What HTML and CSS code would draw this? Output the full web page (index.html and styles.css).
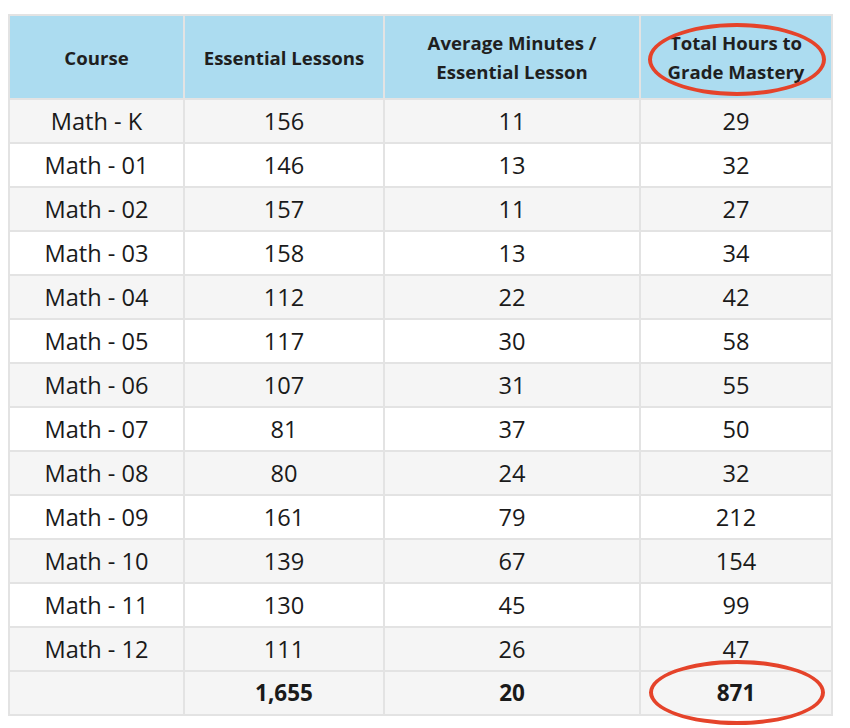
FILE: index.html
```html
<!DOCTYPE html>
<html>
<head>
<meta charset="utf-8">
<link rel="stylesheet" href="styles.css">
</head>
<body>
<table class="grid">
  <colgroup>
    <col class="c1"><col class="c2"><col class="c3"><col class="c4">
  </colgroup>
  <thead>
    <tr>
      <th>Course</th>
      <th>Essential Lessons</th>
      <th>Average Minutes /<br>Essential Lesson</th>
      <th class="mark-cell">Total Hours to<br>Grade Mastery<span class="ring ring-top"></span></th>
    </tr>
  </thead>
  <tbody>
    <tr><td>Math - K</td><td>156</td><td>11</td><td>29</td></tr>
    <tr><td>Math - 01</td><td>146</td><td>13</td><td>32</td></tr>
    <tr><td>Math - 02</td><td>157</td><td>11</td><td>27</td></tr>
    <tr><td>Math - 03</td><td>158</td><td>13</td><td>34</td></tr>
    <tr><td>Math - 04</td><td>112</td><td>22</td><td>42</td></tr>
    <tr><td>Math - 05</td><td>117</td><td>30</td><td>58</td></tr>
    <tr><td>Math - 06</td><td>107</td><td>31</td><td>55</td></tr>
    <tr><td>Math - 07</td><td>81</td><td>37</td><td>50</td></tr>
    <tr><td>Math - 08</td><td>80</td><td>24</td><td>32</td></tr>
    <tr><td>Math - 09</td><td>161</td><td>79</td><td>212</td></tr>
    <tr><td>Math - 10</td><td>139</td><td>67</td><td>154</td></tr>
    <tr><td>Math - 11</td><td>130</td><td>45</td><td>99</td></tr>
    <tr><td>Math - 12</td><td>111</td><td>26</td><td>47</td></tr>
  </tbody>
  <tfoot>
    <tr><td></td><td>1,655</td><td>20</td><td class="mark-cell">871<span class="ring ring-bottom"></span></td></tr>
  </tfoot>
</table>
</body>
</html>
```

FILE: styles.css
```css
html, body {
  margin: 0;
  padding: 0;
  background: #ffffff;
}
body {
  padding: 14px 8px;
  font-family: "Open Sans", "Noto Sans", sans-serif;
  color: #1a1a1a;
}
.grid {
  border-collapse: collapse;
  table-layout: fixed;
  width: 825px;
}
.c1 { width: 175px; }
.c2 { width: 200px; }
.c3 { width: 256px; }
.c4 { width: 192px; }
.grid th, .grid td {
  border: 2px solid #e3e3e3;
  text-align: center;
  padding: 0;
}
.grid th {
  background: #acdcf0;
  height: 82px;
  font-size: 18.6px;
  font-weight: 700;
  line-height: 29px;
  color: #1f1f1f;
}
.grid td {
  height: 42px;
  font-size: 23.6px;
  line-height: 30px;
}
.grid tbody tr:nth-child(odd) td { background: #f5f5f5; }
.grid tbody tr:nth-child(even) td { background: #ffffff; }
.grid tfoot td {
  background: #f5f5f5;
  font-weight: 700;
  font-size: 22.5px;
}
.mark-cell { position: relative; }
.ring {
  position: absolute;
  border: 4px solid #e5432a;
  border-radius: 50%;
  box-sizing: border-box;
  pointer-events: none;
}
.ring-top {
  left: 7px;
  top: 7px;
  width: 178px;
  height: 73px;
}
.ring-bottom {
  left: 8px;
  top: -12px;
  width: 176px;
  height: 65px;
}
```
